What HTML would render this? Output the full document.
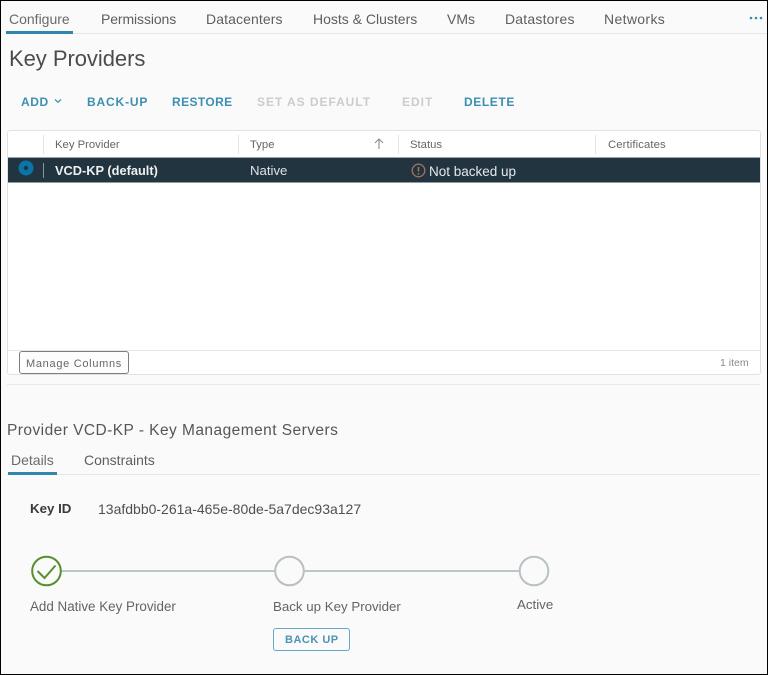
<!DOCTYPE html>
<html><head><meta charset="utf-8"><style>
html,body{margin:0;padding:0}
body{width:768px;height:675px;overflow:hidden;background:#000;position:relative;font-family:"Liberation Sans",sans-serif}
#p{position:absolute;left:1px;top:1px;width:766px;height:673px;background:#fafafa;overflow:hidden}
#r{position:absolute;left:0;top:0;width:768px;height:675px;filter:blur(.35px)}
.t{position:absolute;white-space:nowrap;line-height:16px;color:#565656}
.b{position:absolute}
.tab{font-size:14px;top:11px;color:#5e5e5e}
.act{font-size:12px;top:94px;font-weight:bold;letter-spacing:.9px;color:#3c8fb0}
.dis{color:#c9cdcf}
.th{font-size:11.3px;top:137px;color:#666}
</style></head><body>
<div id="p"></div>
<div id="r">
<div class="t tab" style="left:9px;color:#6a6a6a">Configure</div>
<div class="t tab" style="left:101px;letter-spacing:-.1px">Permissions</div>
<div class="t tab" style="left:206px;letter-spacing:.1px">Datacenters</div>
<div class="t tab" style="left:313px">Hosts &amp; Clusters</div>
<div class="t tab" style="left:447px">VMs</div>
<div class="t tab" style="left:505px;letter-spacing:.2px">Datastores</div>
<div class="t tab" style="left:604px;letter-spacing:.35px">Networks</div>
<svg class="b" style="left:748px;top:15px" width="18" height="6"><circle cx="3" cy="3" r="1.300" fill="#3a87aa"/><circle cx="8" cy="3" r="1.300" fill="#3a87aa"/><circle cx="13" cy="3" r="1.300" fill="#3a87aa"/></svg>
<div class="b" style="left:6px;top:33px;width:761px;height:1px;background:#e4e6e7"></div>
<div class="b" style="left:6px;top:31px;width:67px;height:3px;background:#2f87ad"></div>

<div class="t" style="left:9px;top:46px;font-size:22px;line-height:26px;color:#4c4c4c;letter-spacing:-.05px">Key Providers</div>

<div class="t act" style="left:21px;letter-spacing:.6px">ADD</div>
<svg class="b" style="left:54px;top:98px" width="8" height="6"><path d="M1 1.500 L4 4.300 L7 1.500" fill="none" stroke="#3c8fb0" stroke-width="1.200"/></svg>
<div class="t act" style="left:87px;letter-spacing:.85px">BACK-UP</div>
<div class="t act" style="left:172px;letter-spacing:.4px">RESTORE</div>
<div class="t act dis" style="left:257px;letter-spacing:.95px">SET AS DEFAULT</div>
<div class="t act dis" style="left:402px;letter-spacing:1px">EDIT</div>
<div class="t act" style="left:464px;letter-spacing:.6px">DELETE</div>

<div class="b" style="left:7px;top:130px;width:752px;height:243px;background:#fff;border:1px solid #dfe2e3;border-radius:3px"></div>
<div class="b" style="left:43px;top:135px;width:1px;height:19px;background:#e2e4e5"></div>
<div class="b" style="left:238px;top:135px;width:1px;height:19px;background:#e2e4e5"></div>
<div class="b" style="left:398px;top:135px;width:1px;height:19px;background:#e2e4e5"></div>
<div class="b" style="left:595px;top:135px;width:1px;height:19px;background:#e2e4e5"></div>
<div class="t th" style="left:55px">Key Provider</div>
<div class="t th" style="left:250px">Type</div>
<svg class="b" style="left:373px;top:137px" width="12" height="13"><path d="M6 12 V2 M2 6 L6 2 L10 6" fill="none" stroke="#8a8e90" stroke-width="1.100"/></svg>
<div class="t th" style="left:410px">Status</div>
<div class="t th" style="left:608px;letter-spacing:.1px">Certificates</div>

<div class="b" style="left:8px;top:157px;width:752px;height:26px;background:#22343f;border-top:1px solid #9aa3a8;border-bottom:1px solid #8f999e;box-sizing:border-box"></div>
<svg class="b" style="left:18px;top:160px" width="16" height="16"><circle cx="8" cy="8" r="7.500" fill="#0a75a8"/><circle cx="8" cy="8" r="2.200" fill="#22343f"/></svg>
<div class="b" style="left:43px;top:163px;width:1px;height:15px;background:#8b969c"></div>
<div class="t" style="left:55px;top:163px;font-size:12.8px;font-weight:bold;color:#eef0f1">VCD-KP (default)</div>
<div class="t" style="left:250px;top:163px;font-size:13.2px;color:#dfe3e5">Native</div>
<svg class="b" style="left:411px;top:163px" width="15" height="15"><circle cx="7.500" cy="7.500" r="6.300" fill="none" stroke="#a8705f" stroke-width="1.300"/><path d="M7.500 4 V8.500" stroke="#a8705f" stroke-width="1.500"/><circle cx="7.500" cy="10.800" r=".9" fill="#a8705f"/></svg>
<div class="t" style="left:429px;top:164px;font-size:13.5px;color:#e6e9ea">Not backed up</div>

<div class="b" style="left:8px;top:350px;width:752px;height:1px;background:#e4e6e7"></div>
<div class="b" style="left:19px;top:351px;width:108px;height:21px;border:1px solid #7c7f81;border-radius:3px;background:#fdfdfd"></div>
<div class="t" style="left:26px;top:356px;font-size:11px;letter-spacing:.7px;color:#666">Manage Columns</div>
<div class="t" style="left:720px;top:355px;font-size:10.5px;color:#8a8a8a">1 item</div>

<div class="b" style="left:7px;top:384px;width:753px;height:1px;background:#e8e9ea"></div>

<div class="t" style="left:7px;top:423px;font-size:15.5px;letter-spacing:.45px;color:#565656">Provider VCD-KP - Key Management Servers</div>
<div class="t tab" style="left:11px;top:452px;color:#6a6a6a">Details</div>
<div class="t tab" style="left:84px;top:452px">Constraints</div>
<div class="b" style="left:7px;top:474px;width:753px;height:1px;background:#e4e6e7"></div>
<div class="b" style="left:8px;top:472px;width:49px;height:3px;background:#2f87ad"></div>

<div class="t" style="left:30px;top:501px;font-size:13.3px;font-weight:bold;color:#3a3a3a">Key ID</div>
<div class="t" style="left:98px;top:501px;font-size:14px;color:#4f4f4f">13afdbb0-261a-465e-80de-5a7dec93a127</div>

<svg class="b" style="left:0;top:540px" width="768" height="60">
<path d="M61 31 H275 M304 31 H519" stroke="#b4c0c4" stroke-width="1.800" fill="none"/>
<circle cx="46.500" cy="31" r="14.300" fill="none" stroke="#55902a" stroke-width="2"/>
<path d="M37.500 31 L44.500 38 L55.500 25.500" fill="none" stroke="#55902a" stroke-width="2"/>
<circle cx="289.500" cy="31" r="14.300" fill="none" stroke="#b9bfc2" stroke-width="2"/>
<circle cx="534" cy="31" r="14.300" fill="none" stroke="#b9c1c4" stroke-width="2"/>
</svg>

<div class="t" style="left:30px;top:599px;font-size:13.4px;color:#626466">Add Native Key Provider</div>
<div class="t" style="left:273px;top:599px;font-size:13.3px;color:#626466">Back up Key Provider</div>
<div class="t" style="left:517px;top:597px;font-size:13.3px;color:#626466">Active</div>
<div class="b" style="left:273px;top:628px;width:75px;height:21px;border:1px solid #62a9c4;border-radius:3px"></div>
<div class="t" style="left:285px;top:632px;font-size:11px;font-weight:bold;letter-spacing:.5px;color:#4a94b5">BACK UP</div>
</div>
</body></html>
